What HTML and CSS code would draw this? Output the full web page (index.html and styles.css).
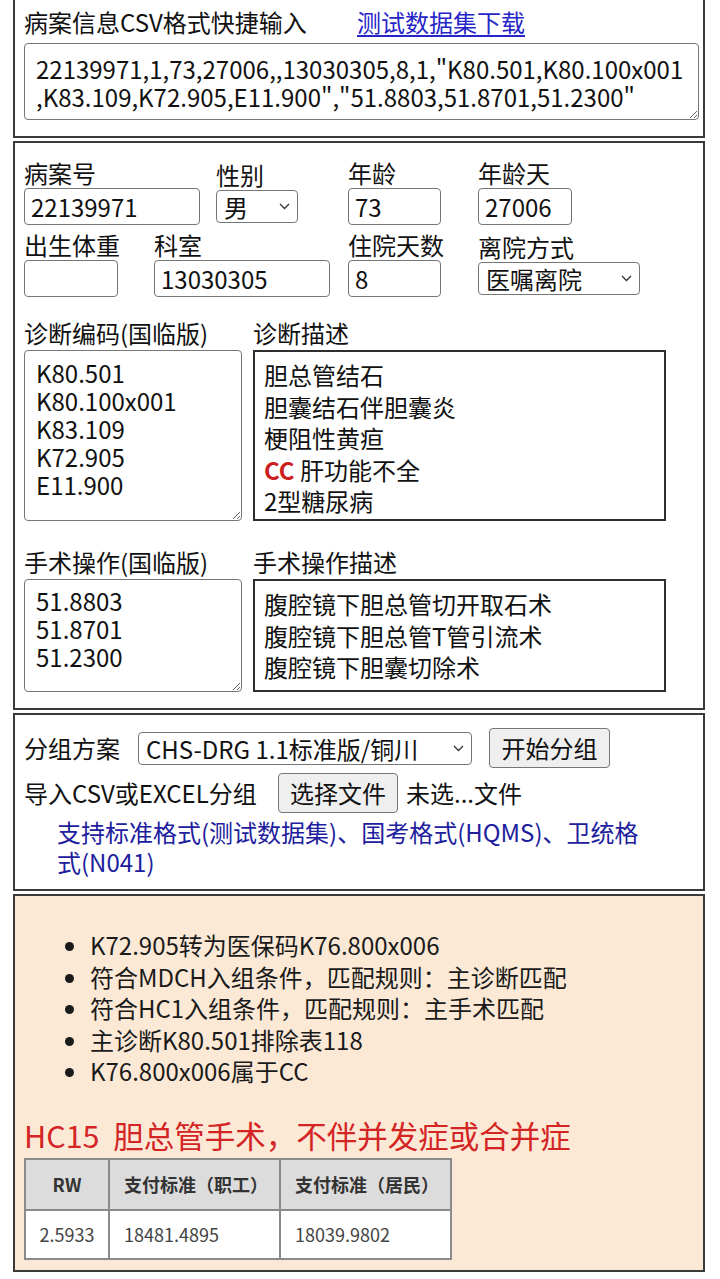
FILE: index.html
```html
<!DOCTYPE html>
<html lang="zh-CN">
<head>
<meta charset="utf-8">
<title>DRG分组</title>
<link rel="stylesheet" href="styles.css">
</head>
<body>
<div class="page">
  <section class="box box-csv">
    <div class="csv-head">
      <span class="csv-title">病案信息CSV格式快捷输入</span>
      <a class="link" href="#">测试数据集下载</a>
    </div>
    <textarea class="ta ta-csv">22139971,1,73,27006,,13030305,8,1,"K80.501,K80.100x001,K83.109,K72.905,E11.900","51.8803,51.8701,51.2300"</textarea>
  </section>

  <section class="box box-case">
    <div class="field-row">
      <div class="field w-192"><div class="lbl">病案号</div><input class="inp in-176" value="22139971"></div>
      <div class="field w-132"><div class="lbl">性别</div>
        <div class="sel-wrap"><select class="sel sel-82"><option>男</option><option>女</option></select>
          <svg class="chev" width="11" height="7" viewBox="0 0 11 7"><polyline points="1,1 5.5,5.5 10,1" fill="none" stroke="#333" stroke-width="1.3"/></svg></div>
      </div>
      <div class="field w-130"><div class="lbl">年龄</div><input class="inp in-93" value="73"></div>
      <div class="field"><div class="lbl">年龄天</div><input class="inp in-94" value="27006"></div>
    </div>
    <div class="field-row row-2">
      <div class="field w-130"><div class="lbl">出生体重</div><input class="inp in-94" value=""></div>
      <div class="field w-194"><div class="lbl">科室</div><input class="inp in-176" value="13030305"></div>
      <div class="field w-130"><div class="lbl">住院天数</div><input class="inp in-93" value="8"></div>
      <div class="field"><div class="lbl">离院方式</div>
        <div class="sel-wrap"><select class="sel sel-162"><option>医嘱离院</option></select>
          <svg class="chev" width="11" height="7" viewBox="0 0 11 7"><polyline points="1,1 5.5,5.5 10,1" fill="none" stroke="#333" stroke-width="1.3"/></svg></div>
      </div>
    </div>

    <div class="code-row diag">
      <div class="code-col">
        <div class="lbl lbl-sec">诊断编码(国临版)</div>
        <textarea class="ta ta-code ta-diag">K80.501
K80.100x001
K83.109
K72.905
E11.900</textarea>
      </div>
      <div class="desc-col">
        <div class="lbl lbl-sec">诊断描述</div>
        <div class="desc desc-diag">
          <div>胆总管结石</div>
          <div>胆囊结石伴胆囊炎</div>
          <div>梗阻性黄疸</div>
          <div><span class="cc">CC</span> 肝功能不全</div>
          <div>2型糖尿病</div>
        </div>
      </div>
    </div>

    <div class="code-row oper">
      <div class="code-col">
        <div class="lbl lbl-sec">手术操作(国临版)</div>
        <textarea class="ta ta-code ta-oper">51.8803
51.8701
51.2300</textarea>
      </div>
      <div class="desc-col">
        <div class="lbl lbl-sec">手术操作描述</div>
        <div class="desc desc-oper">
          <div>腹腔镜下胆总管切开取石术</div>
          <div>腹腔镜下胆总管T管引流术</div>
          <div>腹腔镜下胆囊切除术</div>
        </div>
      </div>
    </div>
  </section>

  <section class="box box-group">
    <div class="grp-row">
      <span class="grp-lbl">分组方案</span>
      <div class="sel-wrap"><select class="sel sel-334"><option>CHS-DRG 1.1标准版/铜川</option></select>
        <svg class="chev" width="11" height="7" viewBox="0 0 11 7"><polyline points="1,1 5.5,5.5 10,1" fill="none" stroke="#333" stroke-width="1.3"/></svg></div>
      <button class="btn btn-start">开始分组</button>
    </div>
    <div class="grp-row row-import">
      <span class="imp-lbl">导入CSV或EXCEL分组</span>
      <button class="btn btn-file">选择文件</button>
      <span class="file-name">未选...文件</span>
    </div>
    <div class="support">支持标准格式(测试数据集)、国考格式(HQMS)、卫统格式(N041)</div>
  </section>

  <section class="box box-result">
    <ul class="rules">
      <li>K72.905转为医保码K76.800x006</li>
      <li>符合MDCH入组条件，匹配规则：主诊断匹配</li>
      <li>符合HC1入组条件，匹配规则：主手术匹配</li>
      <li>主诊断K80.501排除表118</li>
      <li>K76.800x006属于CC</li>
    </ul>
    <div class="drg-title">HC15&nbsp; 胆总管手术，不伴并发症或合并症</div>
    <table class="pay">
      <thead>
        <tr><th class="c-rw">RW</th><th class="c-pay">支付标准（职工）</th><th class="c-pay">支付标准（居民）</th></tr>
      </thead>
      <tbody>
        <tr><td class="c-rw">2.5933</td><td class="c-pay">18481.4895</td><td class="c-pay">18039.9802</td></tr>
      </tbody>
    </table>
  </section>
</div>
</body>
</html>
```

FILE: styles.css
```css
* { box-sizing: border-box; }
html, body { margin: 0; padding: 0; background: #fff; }
body {
  font-family: "Noto Sans CJK SC", "Noto Sans", sans-serif;
  font-size: 24px;
  line-height: 28px;
  color: #111;
}
.page {
  margin-top: -10px;
  margin-left: 13px;
  width: 692px;
}
.box {
  border: 2px solid #3a3a3a;
  padding: 16px 4px 16px 9px;
}
.box + .box { margin-top: 3px; }
.box-case { margin-top: 4px; }

/* CSV */
.csv-head { display: flex; height: 28px; align-items: center; }
.csv-title { width: 333px; }
.link { color: #2626c8; text-decoration: underline; text-underline-offset: 3px; }
.ta {
  display: block;
  width: 100%;
  font: inherit;
  font-size: 24px;
  line-height: 28px;
  color: #111;
  border: 1px solid #767676;
  border-radius: 4px;
  padding: 11px 8px 4px 11px;
  background: #fff;
  overflow: hidden;
}
.ta-csv { margin-top: 7px; height: 77px; padding-right: 12px; }

/* case fields */
.field-row { display: flex; align-items: last baseline; }
.row-2 { margin-top: 6px; }
.field { display: flex; flex-direction: column; align-items: flex-start; }
.w-192 { width: 192px; }
.w-132 { width: 132px; }
.w-130 { width: 130px; }
.w-194 { width: 194px; }
.lbl { line-height: 28px; height: 28px; margin-bottom: 1px; white-space: nowrap; }
.inp {
  font: inherit;
  font-size: 24px;
  color: #111;
  height: 37px;
  border: 1px solid #767676;
  border-radius: 4px;
  padding: 0 6px;
  background: #fff;
}
.in-176 { width: 176px; }
.in-93 { width: 93px; }
.in-94 { width: 94px; }
.sel-wrap { position: relative; display: inline-block; }
.sel {
  -webkit-appearance: none;
  appearance: none;
  font: inherit;
  font-size: 24px;
  color: #111;
  height: 33px;
  line-height: 31px;
  border: 1px solid #767676;
  border-radius: 4px;
  padding: 0 24px 0 7px;
  background: #fff;
  display: block;
}
.sel-82 { width: 82px; }
.sel-162 { width: 162px; }
.sel-334 { width: 334px; }
.chev { position: absolute; right: 8px; top: 13px; }

/* codes */
.code-row { display: flex; gap: 11px; }
.diag { margin-top: 22px; }
.oper { margin-top: 27px; }
.code-col { width: 218px; }
.desc-col { width: 413px; }
.lbl-sec { margin-bottom: 3px; }
.ta-code { padding: 8px 8px 4px 11px; }
.ta-diag { height: 171px; }
.ta-oper { height: 113px; padding-top: 7px; }
.desc {
  border: 2px solid #2e2e2e;
  padding: 7px 9px;
  line-height: 31.5px;
}
.desc-diag { height: 171px; }
.desc-oper { height: 113px; }
.cc { color: #cc1f1f; font-weight: 700; }

/* group */
.box-group { padding-top: 13px; padding-bottom: 12px; }
.grp-row { display: flex; align-items: center; height: 40px; }
.grp-lbl { width: 114px; }
.btn {
  font: inherit;
  font-size: 24px;
  line-height: 28px;
  color: #111;
  height: 40px;
  background: #efefef;
  border: 1px solid #767676;
  border-radius: 4px;
  padding: 0;
  white-space: nowrap;
  text-align: center;
}
.btn-start { margin-left: 17px; width: 121px; }
.row-import { margin-top: 5px; }
.imp-lbl { width: 254px; }
.btn-file { width: 120px; }
.file-name { margin-left: 8px; }
.support {
  margin-top: 4px;
  margin-left: 33px;
  width: 600px;
  color: #20209e;
  line-height: 30px;
}

/* result */
.box-result {
  background: #fbe9d6;
  padding-top: 33px;
  padding-bottom: 10px;
}
.rules {
  margin: 0;
  padding-left: 66px;
  line-height: 31.5px;
  color: #1a1a1a;
}
.drg-title {
  margin-top: 30px;
  font-size: 30.5px;
  line-height: 36px;
  color: #d42424;
  margin-bottom: 5px;
}
.pay {
  border-collapse: collapse;
  font-size: 18px;
  line-height: 24px;
  border: 2px solid #8a8a8a;
}
.pay th, .pay td { border: 2px solid #8a8a8a; padding: 0 14px; text-align: left; }
.pay th { background: #dcdcdc; height: 51px; font-weight: 700; color: #333; }
.pay td { background: #fff; height: 49px; color: #444; font-weight: 400; }
.pay .c-rw { width: 84px; text-align: center; padding: 0 4px; }
.pay .c-pay { width: 171px; }
```
